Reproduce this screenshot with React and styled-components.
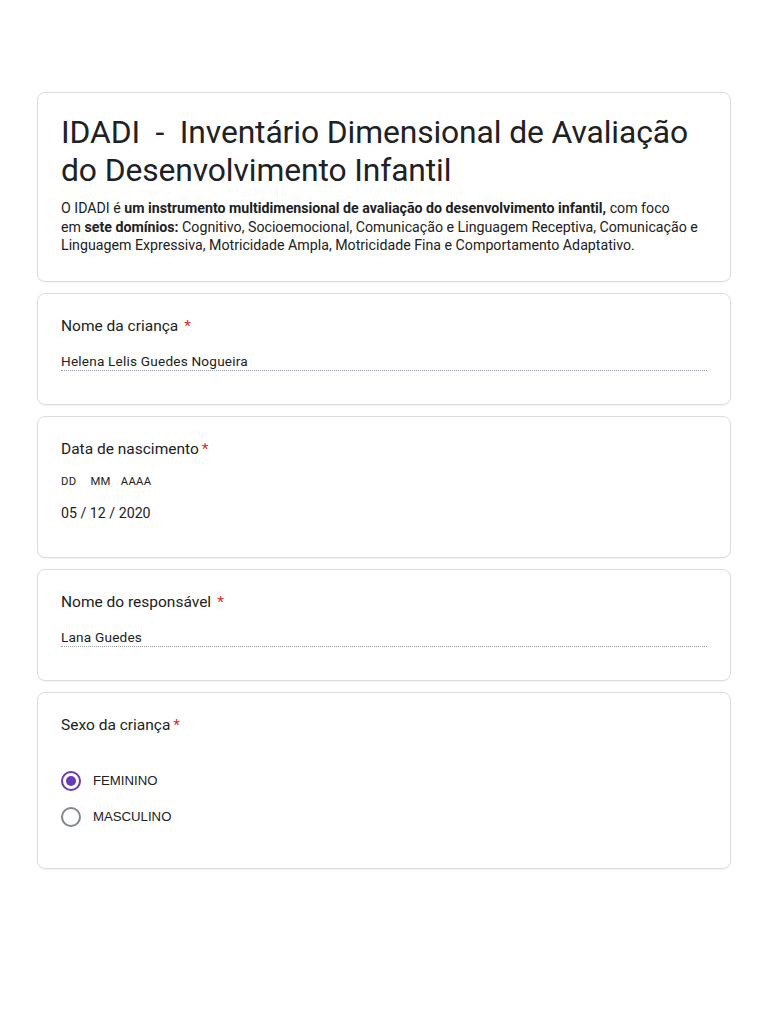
import React from 'react';
import styled, { createGlobalStyle } from 'styled-components';

const GlobalStyle = createGlobalStyle`
  body {
    margin: 0;
    background: #ffffff;
    font-family: Roboto, "Liberation Sans", Arial, sans-serif;
    color: #202124;
  }
`;

const Page = styled.div`
  width: 694px;
  margin: 0 auto;
  padding: 92px 0 40px;
  display: flex;
  flex-direction: column;
  gap: 11px;
`;

const Card = styled.section`
  background: #fff;
  border: 1px solid #dadce0;
  border-radius: 8px;
  box-shadow: 0 1px 1px rgba(0, 0, 0, 0.04);
  padding: ${(p) => p.$pad || '22px 23px 33px'};
`;

const Title = styled.h1`
  margin: 0;
  font-size: 31.8px;
  font-weight: 400;
  line-height: 38px;
  letter-spacing: -0.1px;
`;

const Description = styled.div`
  margin: 10px 0 0;
  font-size: 14.2px;
  line-height: 18.6px;
  b {
    font-weight: 700;
  }
`;

const DescLine = styled.div`
  white-space: nowrap;
`;

const Label = styled.div`
  font-size: 15.5px;
  line-height: 20px;
  color: #202124;
`;

const Star = styled.span`
  color: #d93025;
  margin-left: ${(p) => p.$gap || '6px'};
`;

const Answer = styled.div`
  margin-top: 17px;
  font-size: 13.6px;
  line-height: 16px;
  padding-bottom: 1px;
  border-bottom: 1px dotted #9aa0a6;
  letter-spacing: 0.2px;
`;

const DateHints = styled.div`
  margin-top: 16px;
  display: flex;
  gap: 16px;
  font-size: 11.3px;
  line-height: 14px;
  letter-spacing: 0.3px;
`;

const DateValue = styled.div`
  margin-top: 16px;
  font-size: 14.2px;
  line-height: 16px;
`;

const Options = styled.div`
  margin-top: 36px;
  display: flex;
  flex-direction: column;
  gap: 16px;
`;

const Option = styled.div`
  display: flex;
  align-items: center;
  gap: 12px;
  font-family: "Liberation Sans", Arial, sans-serif;
  font-size: 13.2px;
  line-height: 20px;
`;

const Radio = styled.span`
  width: 20px;
  height: 20px;
  box-sizing: border-box;
  border-radius: 50%;
  border: 2px solid ${(p) => (p.$checked ? '#673ab7' : '#80868b')};
  display: flex;
  align-items: center;
  justify-content: center;
  &::after {
    content: '';
    width: 10px;
    height: 10px;
    border-radius: 50%;
    background: #673ab7;
    display: ${(p) => (p.$checked ? 'block' : 'none')};
  }
`;

export default function App() {
  return (
    <>
      <GlobalStyle />
      <Page>
        <Card $pad="20px 23px 26px">
          <Title>
            IDADI&nbsp; -&nbsp; Inventário Dimensional de Avaliação
            <br />
            do Desenvolvimento Infantil
          </Title>
          <Description>
            <DescLine>
              O IDADI é <b>um instrumento multidimensional de avaliação do desenvolvimento infantil,</b> com foco
            </DescLine>
            <DescLine>
              em <b>sete domínios:</b> Cognitivo, Socioemocional, Comunicação e Linguagem Receptiva, Comunicação e
            </DescLine>
            <DescLine>
              Linguagem Expressiva, Motricidade Ampla, Motricidade Fina e Comportamento Adaptativo.
            </DescLine>
          </Description>
        </Card>

        <Card>
          <Label>
            Nome da criança<Star>*</Star>
          </Label>
          <Answer>Helena Lelis Guedes Nogueira</Answer>
        </Card>

        <Card $pad="22px 23px 36px">
          <Label>
            Data de nascimento<Star $gap="3px">*</Star>
          </Label>
          <DateHints>
            <span>DD</span>
            <span style={{ marginLeft: -2 }}>MM</span>
            <span style={{ marginLeft: -6 }}>AAAA</span>
          </DateHints>
          <DateValue>05 / 12 / 2020</DateValue>
        </Card>

        <Card>
          <Label>
            Nome do responsável<Star>*</Star>
          </Label>
          <Answer>Lana Guedes</Answer>
        </Card>

        <Card $pad="22px 23px 41px">
          <Label>
            Sexo da criança<Star $gap="3px">*</Star>
          </Label>
          <Options>
            <Option>
              <Radio $checked />
              FEMININO
            </Option>
            <Option>
              <Radio />
              MASCULINO
            </Option>
          </Options>
        </Card>
      </Page>
    </>
  );
}
